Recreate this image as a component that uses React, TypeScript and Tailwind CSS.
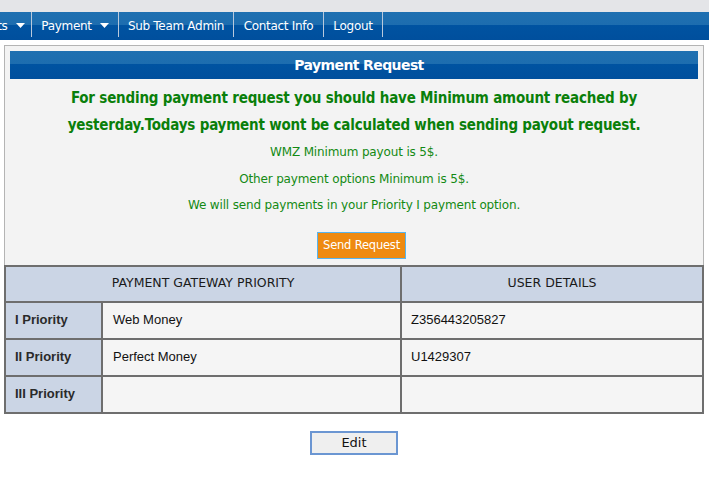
const tahoma = { fontFamily: '"DejaVu Sans", Verdana, sans-serif' };

function NavItem({ label, arrow, className = '' }: { label: string; arrow?: boolean; className?: string }) {
  return (
    <div className={`flex h-full items-center justify-center gap-[8px] border-r border-[#b9c9dc] pt-[2px] text-[12px] tracking-[-0.3px] text-white ${className}`}>
      <span>{label}</span>
      {arrow && (
        <svg width="9" height="5" viewBox="0 0 9 5">
          <path d="M0 0h9L4.5 5z" fill="#fff" />
        </svg>
      )}
    </div>
  );
}

const rows = [
  { label: 'I Priority', gateway: 'Web Money', details: 'Z356443205827' },
  { label: 'II Priority', gateway: 'Perfect Money', details: 'U1429307' },
  { label: 'III Priority', gateway: '', details: '' },
];

export default function App() {
  return (
    <div className="min-h-[481px] w-[709px] bg-white" style={tahoma}>
      <div className="h-[12px] bg-[#e4e5e8]" />
      <nav className="flex h-[28px] overflow-hidden bg-[linear-gradient(#1f70b1_0%,#1d6daf_46%,#0053a1_47%,#004f9d_100%)]">
        <div className="flex h-[25px] self-start">
          <NavItem label="Stats" arrow className="ml-[-24px] w-[56px] pr-[4px]" />
          <NavItem label="Payment" arrow className="w-[87px]" />
          <NavItem label="Sub Team Admin" className="w-[115px]" />
          <NavItem label="Contact Info" className="w-[90px]" />
          <NavItem label="Logout" className="w-[59px]" />
        </div>
      </nav>

      <div className="ml-[4px] w-[700px]">
        <div className="mt-[5px] border border-b-0 border-[#b4b4b4] bg-[#f3f3f3] px-[5px] pt-[5px] pb-[6px]">
          <div className="flex h-[28px] items-center justify-center bg-[linear-gradient(#1f70b1_0%,#1d6daf_46%,#0053a1_47%,#004f9d_100%)] pl-[10px] text-[14px] font-bold tracking-[-0.6px] text-white">
            Payment Request
          </div>
          <p className="mt-[6px] text-center text-[15px] font-bold leading-[27px] tracking-[-0.2px] text-[#0a7f0a] [font-stretch:condensed]">
            For sending payment request you should have Minimum amount reached by yesterday.Todays payment wont be calculated when sending payout request.
          </p>
          <div className="text-center text-[12px] leading-[26.5px] tracking-[-0.15px] text-[#138a13]">
            <p>WMZ Minimum payout is 5$.</p>
            <p>Other payment options Minimum is 5$.</p>
            <p>We will send payments in your Priority I payment option.</p>
          </div>
          <div className="mt-[13px] flex justify-center">
            <button className="ml-[15px] h-[27px] w-[89px] border border-[#58b4ee] bg-[#ee8a10] pt-[2px] text-[11.5px] tracking-[-0.2px] text-white">
              Send Request
            </button>
          </div>
        </div>

        <table className="w-full border-collapse border-2 border-[#6e6e6e] text-[13px]" style={{ fontFamily: '"Liberation Sans", Arial, sans-serif' }}>
          <thead>
            <tr className="h-[36px] bg-[#cbd5e5] text-[#1a1a1a]">
              <th colSpan={2} className="border-2 border-[#6e6e6e] text-[12.5px] font-normal" style={tahoma}>
                PAYMENT GATEWAY PRIORITY
              </th>
              <th className="border-2 border-[#6e6e6e] text-[12.5px] font-normal" style={tahoma}>
                USER DETAILS
              </th>
            </tr>
          </thead>
          <tbody>
            {rows.map((r) => (
              <tr key={r.label} className="h-[37px]">
                <td className="w-[97px] border-2 border-[#6e6e6e] bg-[#cbd5e5] pl-[9px] font-bold text-[#2a2a2a]">{r.label}</td>
                <td className="w-[299px] border-2 border-[#6e6e6e] bg-[#f5f5f5] pl-[10px] text-[#111]">{r.gateway}</td>
                <td className="border-2 border-[#6e6e6e] bg-[#f5f5f5] pl-[9px] text-[#111]">{r.details}</td>
              </tr>
            ))}
          </tbody>
        </table>

        <div className="mt-[17px] flex justify-center">
          <button className="h-[24px] w-[88px] border-2 border-[#6b96d2] bg-[#efefef] text-[13px] text-[#111]">
            Edit
          </button>
        </div>
      </div>
    </div>
  );
}
